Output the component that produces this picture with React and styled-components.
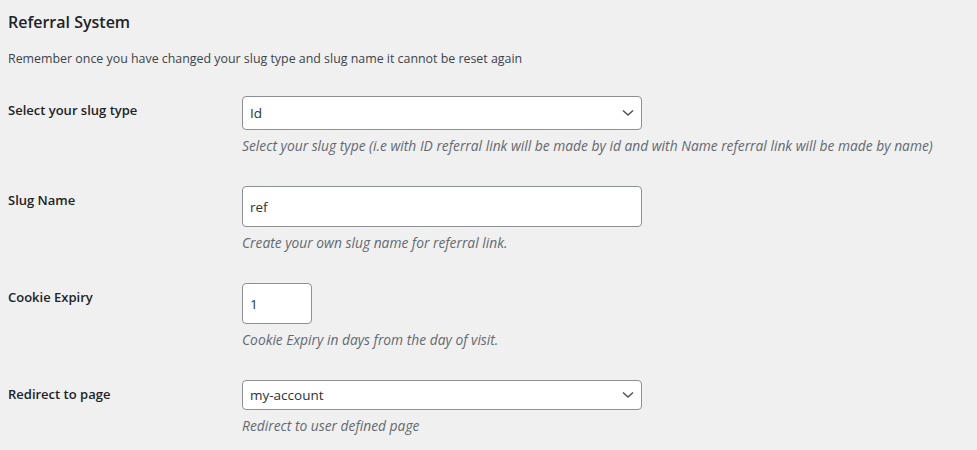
import React from "react";
import styled, { createGlobalStyle } from "styled-components";

const GlobalStyle = createGlobalStyle`
  html, body {
    margin: 0;
    padding: 0;
    background: #f0f0f1;
  }
  body {
    font-family: "Open Sans", "Noto Sans", sans-serif;
    color: #1d2327;
    font-size: 13px;
  }
`;

const Page = styled.div`
  padding: 0 8px;
  width: 977px;
  box-sizing: border-box;
`;

const Title = styled.h2`
  margin: 0;
  padding-top: 12px;
  font-size: 16px;
  line-height: 21px;
  font-weight: 600;
  color: #1d2327;
`;

const Intro = styled.p`
  margin: 0;
  padding-top: 17px;
  font-size: 12.4px;
  line-height: 18px;
  color: #3c434a;
`;

const Form = styled.div`
  display: flex;
  flex-direction: column;
  padding-top: 12px;
`;

const Row = styled.div`
  display: flex;
  padding: 16px 0;
`;

const Label = styled.div`
  width: 234px;
  flex: none;
  padding-top: 5px;
  font-size: 13px;
  line-height: 19px;
  font-weight: 600;
  color: #1d2327;
`;

const Field = styled.div`
  display: flex;
  flex-direction: column;
  align-items: flex-start;
`;

const Box = styled.div`
  position: relative;
  box-sizing: border-box;
  width: ${(p) => p.$width}px;
  height: ${(p) => p.$height}px;
  background: #fff;
  border: 1px solid #8c8f94;
  border-radius: 4px;
  padding: 0 7px;
  display: flex;
  align-items: center;
  font-size: 13.5px;
  color: #2c3338;
`;

const Chevron = styled.svg`
  position: absolute;
  right: 7px;
  top: 50%;
  margin-top: -4px;
`;

const Desc = styled.div`
  margin-top: 8px;
  font-size: 13.8px;
  line-height: 16px;
  font-style: italic;
  color: #646970;
  white-space: nowrap;
`;

const Select = ({ value, height }) => (
  <Box $width={400} $height={height}>
    {value}
    <Chevron width="12" height="8" viewBox="0 0 12 8">
      <path d="M1 1.5 L6 6 L11 1.5" fill="none" stroke="#50575e" strokeWidth="1.6" />
    </Chevron>
  </Box>
);

const rows = [
  {
    label: "Select your slug type",
    field: <Select value="Id" height={34} />,
    desc: "Select your slug type (i.e with ID referral link will be made by id and with Name referral link will be made by name)",
  },
  {
    label: "Slug Name",
    field: <Box $width={400} $height={41}>ref</Box>,
    desc: "Create your own slug name for referral link.",
  },
  {
    label: "Cookie Expiry",
    field: <Box $width={70} $height={41}>1</Box>,
    desc: "Cookie Expiry in days from the day of visit.",
  },
  {
    label: "Redirect to page",
    field: <Select value="my-account" height={30} />,
    desc: "Redirect to user defined page",
  },
];

export default function App() {
  return (
    <Page>
      <GlobalStyle />
      <Title>Referral System</Title>
      <Intro>Remember once you have changed your slug type and slug name it cannot be reset again</Intro>
      <Form>
        {rows.map((r) => (
          <Row key={r.label}>
            <Label>{r.label}</Label>
            <Field>
              {r.field}
              <Desc>{r.desc}</Desc>
            </Field>
          </Row>
        ))}
      </Form>
    </Page>
  );
}
